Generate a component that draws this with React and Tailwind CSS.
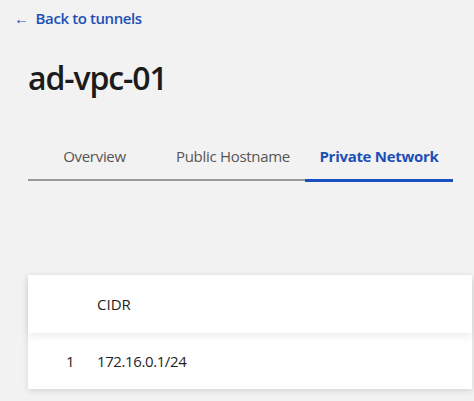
export default function App() {
  return (
    <div className="min-h-[401px] w-[474px] overflow-hidden bg-[#f2f2f2] font-['Open_Sans',sans-serif] text-[#1f1f1f]">
      <div className="pl-[14px] pt-[8px] flex items-center gap-[7px] text-[15px] leading-[20px] font-semibold tracking-[-0.4px] text-[#1d50b5]">
        <span className="font-normal text-[15px]">←</span>
        <span>Back to tunnels</span>
      </div>
      <h1 className="mt-[30px] ml-[28px] text-[32px] leading-[40px] font-semibold tracking-[-1.1px] text-[#1b1b1b]">
        ad-vpc-01
      </h1>
      <div className="mt-[31px] ml-[28px] flex items-start text-[15px] leading-[20px] tracking-[-0.3px]">
        <div className="w-[133px] h-[52px] pt-[4px] flex items-center justify-center text-[#555] border-b-2 border-[#9a9a9a]">
          Overview
        </div>
        <div className="w-[144px] h-[52px] pt-[4px] flex items-center justify-center text-[#555] border-b-2 border-[#9a9a9a]">
          Public Hostname
        </div>
        <div className="w-[148px] h-[53px] pt-[4px] flex items-center justify-center font-bold text-[#1d4fb8] border-b-[3px] border-[#1a4fc0]">
          Private Network
        </div>
      </div>
      <div className="mt-[93px] ml-[28px] w-[444px] bg-white shadow-[0_2px_6px_rgba(0,0,0,0.12)] text-[15px] text-[#1f1f1f]">
        <div className="relative h-[58px] flex items-center bg-white shadow-[0_3px_8px_rgba(0,0,0,0.08)]">
          <span className="w-[69px]"></span>
          <span>CIDR</span>
        </div>
        <div className="h-[56px] flex items-center">
          <span className="w-[69px] pl-[38px]">1</span>
          <span className="tracking-[-0.4px]">172.16.0.1/24</span>
        </div>
      </div>
    </div>
  );
}
